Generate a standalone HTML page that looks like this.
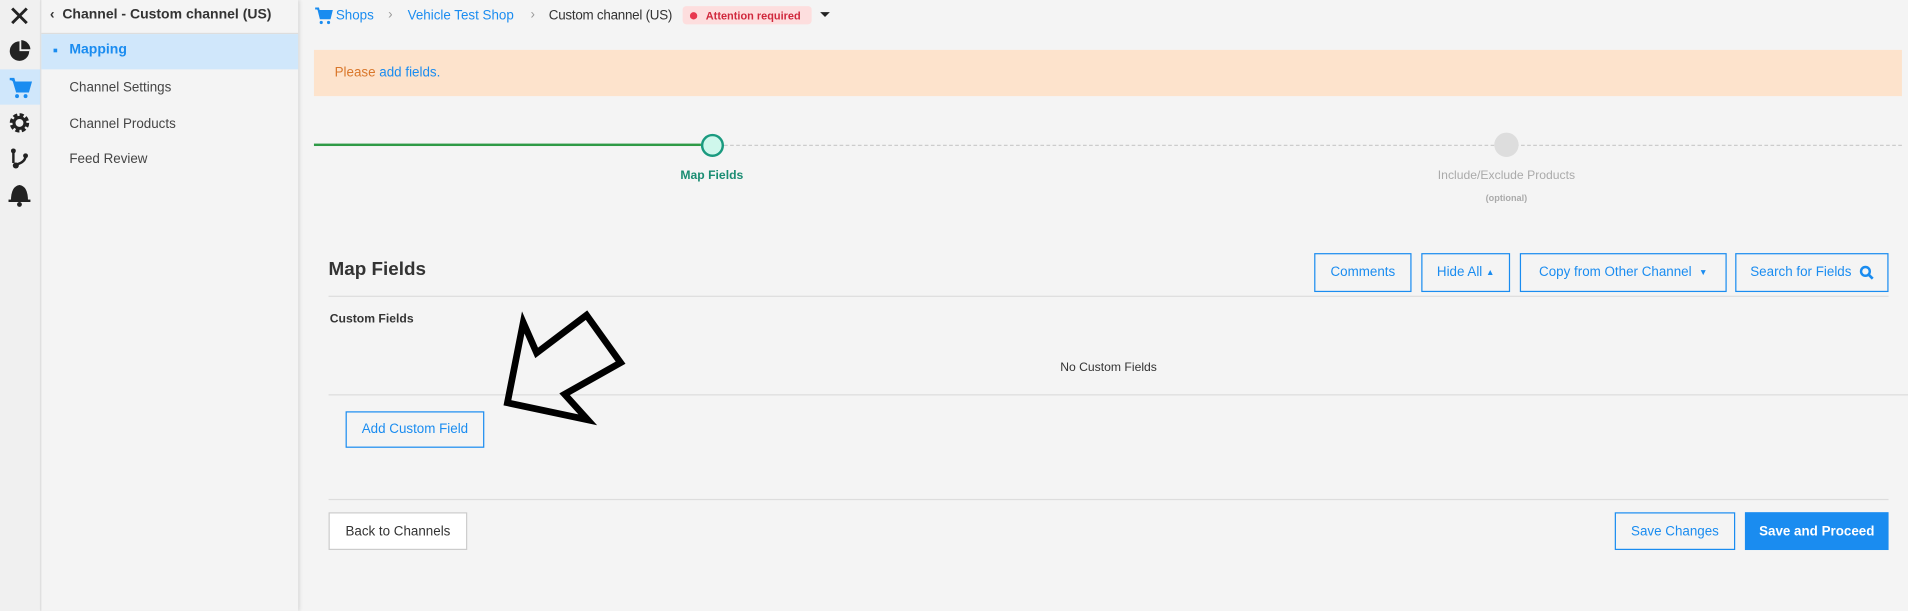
<!DOCTYPE html>
<html><head><meta charset="utf-8"><style>
html,body{margin:0;padding:0;width:1908px;height:610px;overflow:hidden;background:#f4f4f4;font-family:"Liberation Sans",sans-serif}
#w{position:absolute;left:0;top:0;width:1568px;height:502px;transform:scale(1.21684);transform-origin:0 0;background:#f4f4f4}
.a{position:absolute;white-space:nowrap}
.btn{position:absolute;box-sizing:border-box;border:1px solid #1a8cf0;color:#1a8cf0;font-size:11px;display:flex;align-items:center;justify-content:center;background:#f4f4f4}
</style></head><body><div id="w">
<div class="a" style="left:0;top:0;width:33px;height:502px;background:#f0f0f0;border-right:1px solid #e2e2e2"></div>
<div class="a" style="left:0;top:57px;width:33px;height:29px;background:#d0e7fb"></div>
<svg class="a" style="left:0;top:0" width="33" height="180">
<path d="M10 7 L22 19 M22 7 L10 19" stroke="#222" stroke-width="2.4"/>
<circle cx="16" cy="42" r="8" fill="#222"/><path d="M16 34 V42 H24 A8 8 0 0 0 16 34Z" fill="#f0f0f0"/><path d="M17.5 33 V40.5 H25 A8 8 0 0 0 17.5 33Z" fill="#222"/>
<path d="M8 65 H11 L14 75 H23 L25 68 H12" fill="#1a8cf0" stroke="#1a8cf0" stroke-width="2"/><circle cx="14" cy="79" r="1.6" fill="#1a8cf0"/><circle cx="21" cy="79" r="1.6" fill="#1a8cf0"/>
<circle cx="16" cy="101" r="6" fill="none" stroke="#222" stroke-width="4" stroke-dasharray="3 1.7"/><circle cx="16" cy="101" r="4.5" fill="none" stroke="#222" stroke-width="2.5"/>
<circle cx="11" cy="124" r="2" fill="#222"/><circle cx="21" cy="128" r="2" fill="#222"/><circle cx="13" cy="136" r="2.5" fill="#222"/><path d="M11 124 V134 M21 128 Q21 133 14 135" stroke="#222" stroke-width="2" fill="none"/>
<path d="M9 165 Q9 153 16 152 Q23 153 23 165Z" fill="#222"/><rect x="7" y="164" width="18" height="2" fill="#222"/><circle cx="16" cy="168" r="2" fill="#222"/>
</svg>
<div class="a" style="left:34px;top:0;width:211px;height:502px;background:#f4f4f4;box-shadow:1px 0 3px rgba(0,0,0,.12)"></div>
<div class="a" style="left:34px;top:0;width:211px;height:27px;border-bottom:1px solid #ddd"></div>
<div class="a" style="left:41px;top:6px;font-size:11.5px;font-weight:bold;color:#333">‹&nbsp;&nbsp;Channel - Custom channel (US)</div>
<div class="a" style="left:34px;top:28px;width:211px;height:29px;background:#d0e7fb"></div>
<div class="a" style="left:44px;top:40px;width:3px;height:3px;background:#1a8cf0"></div>
<div class="a" style="left:57px;top:35px;font-size:11.5px;font-weight:bold;color:#1a8cf0">Mapping</div>
<div class="a" style="left:57px;top:66px;font-size:11px;color:#444">Channel Settings</div>
<div class="a" style="left:57px;top:96px;font-size:11px;color:#444">Channel Products</div>
<div class="a" style="left:57px;top:125px;font-size:11px;color:#444">Feed Review</div>
<svg class="a" style="left:258px;top:5px" width="16" height="16"><path d="M1 2 H3.5 L5.5 10 H13 L14.5 4 H4.5" fill="#1a8cf0" stroke="#1a8cf0" stroke-width="1.6"/><circle cx="6" cy="13.5" r="1.3" fill="#1a8cf0"/><circle cx="12" cy="13.5" r="1.3" fill="#1a8cf0"/></svg>
<div class="a" style="left:276px;top:7px;font-size:11px;color:#1a8cf0">Shops</div>
<div class="a" style="left:319px;top:6px;font-size:11px;color:#999">›</div>
<div class="a" style="left:335px;top:7px;font-size:11px;color:#1a8cf0">Vehicle Test Shop</div>
<div class="a" style="left:436px;top:6px;font-size:11px;color:#999">›</div>
<div class="a" style="left:451px;top:7px;font-size:11px;color:#333;letter-spacing:-0.2px">Custom channel (US)</div>
<div class="a" style="left:561px;top:5px;width:106px;height:15px;background:#fddede;border-radius:3px"></div>
<div class="a" style="left:567px;top:10px;width:6px;height:6px;border-radius:50%;background:#e8384f"></div>
<div class="a" style="left:580px;top:7.5px;font-size:9px;font-weight:bold;color:#d0283c">Attention required</div>
<div class="a" style="left:674px;top:10px;border:4px solid transparent;border-top:4px solid #222;border-bottom:0"></div>
<div class="a" style="left:258px;top:41px;width:1305px;height:38px;background:#fde3cc"></div>
<div class="a" style="left:275px;top:54px;font-size:11px;color:#d9772b">Please <span style="color:#1a8cf0">add fields.</span></div>
<div class="a" style="left:258px;top:118px;width:318px;height:2px;background:#2e9a46"></div>
<div class="a" style="left:595px;top:119px;width:968px;border-top:1px dashed #ccc"></div>
<div class="a" style="left:576px;top:110px;width:15px;height:15px;border:2px solid #1a9a7f;border-radius:50%;background:#cff7ec"></div>
<div class="a" style="left:1228px;top:109px;width:20px;height:20px;border-radius:50%;background:#ddd"></div>
<div class="a" style="left:535px;top:139px;width:100px;text-align:center;font-size:10px;font-weight:bold;color:#1a8c72">Map Fields</div>
<div class="a" style="left:1138px;top:139px;width:200px;text-align:center;font-size:10px;color:#aaa">Include/Exclude Products</div>
<div class="a" style="left:1138px;top:158px;width:200px;text-align:center;font-size:7.5px;font-weight:bold;color:#aaa">(optional)</div>
<div class="a" style="left:270px;top:213px;font-size:15.5px;font-weight:bold;color:#333">Map Fields</div>
<div class="btn" style="left:1080px;top:208px;width:80px;height:32px">Comments</div>
<div class="btn" style="left:1168px;top:208px;width:73px;height:32px">Hide All&nbsp;<span style="font-size:7px">▲</span></div>
<div class="btn" style="left:1249px;top:208px;width:170px;height:32px">Copy from Other Channel&nbsp;&nbsp;<span style="font-size:7px">▼</span></div>
<div class="btn" style="left:1426px;top:208px;width:126px;height:32px">Search for Fields&nbsp;&nbsp;<svg width="12" height="12"><circle cx="5" cy="5" r="3.6" fill="none" stroke="#1a8cf0" stroke-width="2"/><path d="M7.5 7.5 L11 11" stroke="#1a8cf0" stroke-width="2.2"/></svg></div>
<div class="a" style="left:270px;top:243px;width:1282px;height:1px;background:#ddd"></div>
<div class="a" style="left:271px;top:257px;font-size:10px;font-weight:bold;color:#333">Custom Fields</div>
<div class="a" style="left:811px;top:297px;width:200px;text-align:center;font-size:10px;color:#333">No Custom Fields</div>
<div class="a" style="left:270px;top:324px;width:1298px;height:1px;background:#ddd"></div>
<div class="btn" style="left:284px;top:338px;width:114px;height:30px">Add Custom Field</div>
<svg class="a" style="left:0;top:0" width="700" height="400"><polygon points="417,331 430,265 441,290 482,259 510,298 464,324 483,345" fill="none" stroke="#000" stroke-width="5.5" stroke-linejoin="miter"/></svg>
<div class="a" style="left:270px;top:410px;width:1282px;height:1px;background:#ddd"></div>
<div class="btn" style="left:270px;top:421px;width:114px;height:31px;border-color:#ccc;background:#fff;color:#333">Back to Channels</div>
<div class="btn" style="left:1327px;top:421px;width:99px;height:31px">Save Changes</div>
<div class="btn" style="left:1434px;top:421px;width:118px;height:31px;background:#1a8cf0;color:#fff;font-weight:bold">Save and Proceed</div>
</div></body></html>
